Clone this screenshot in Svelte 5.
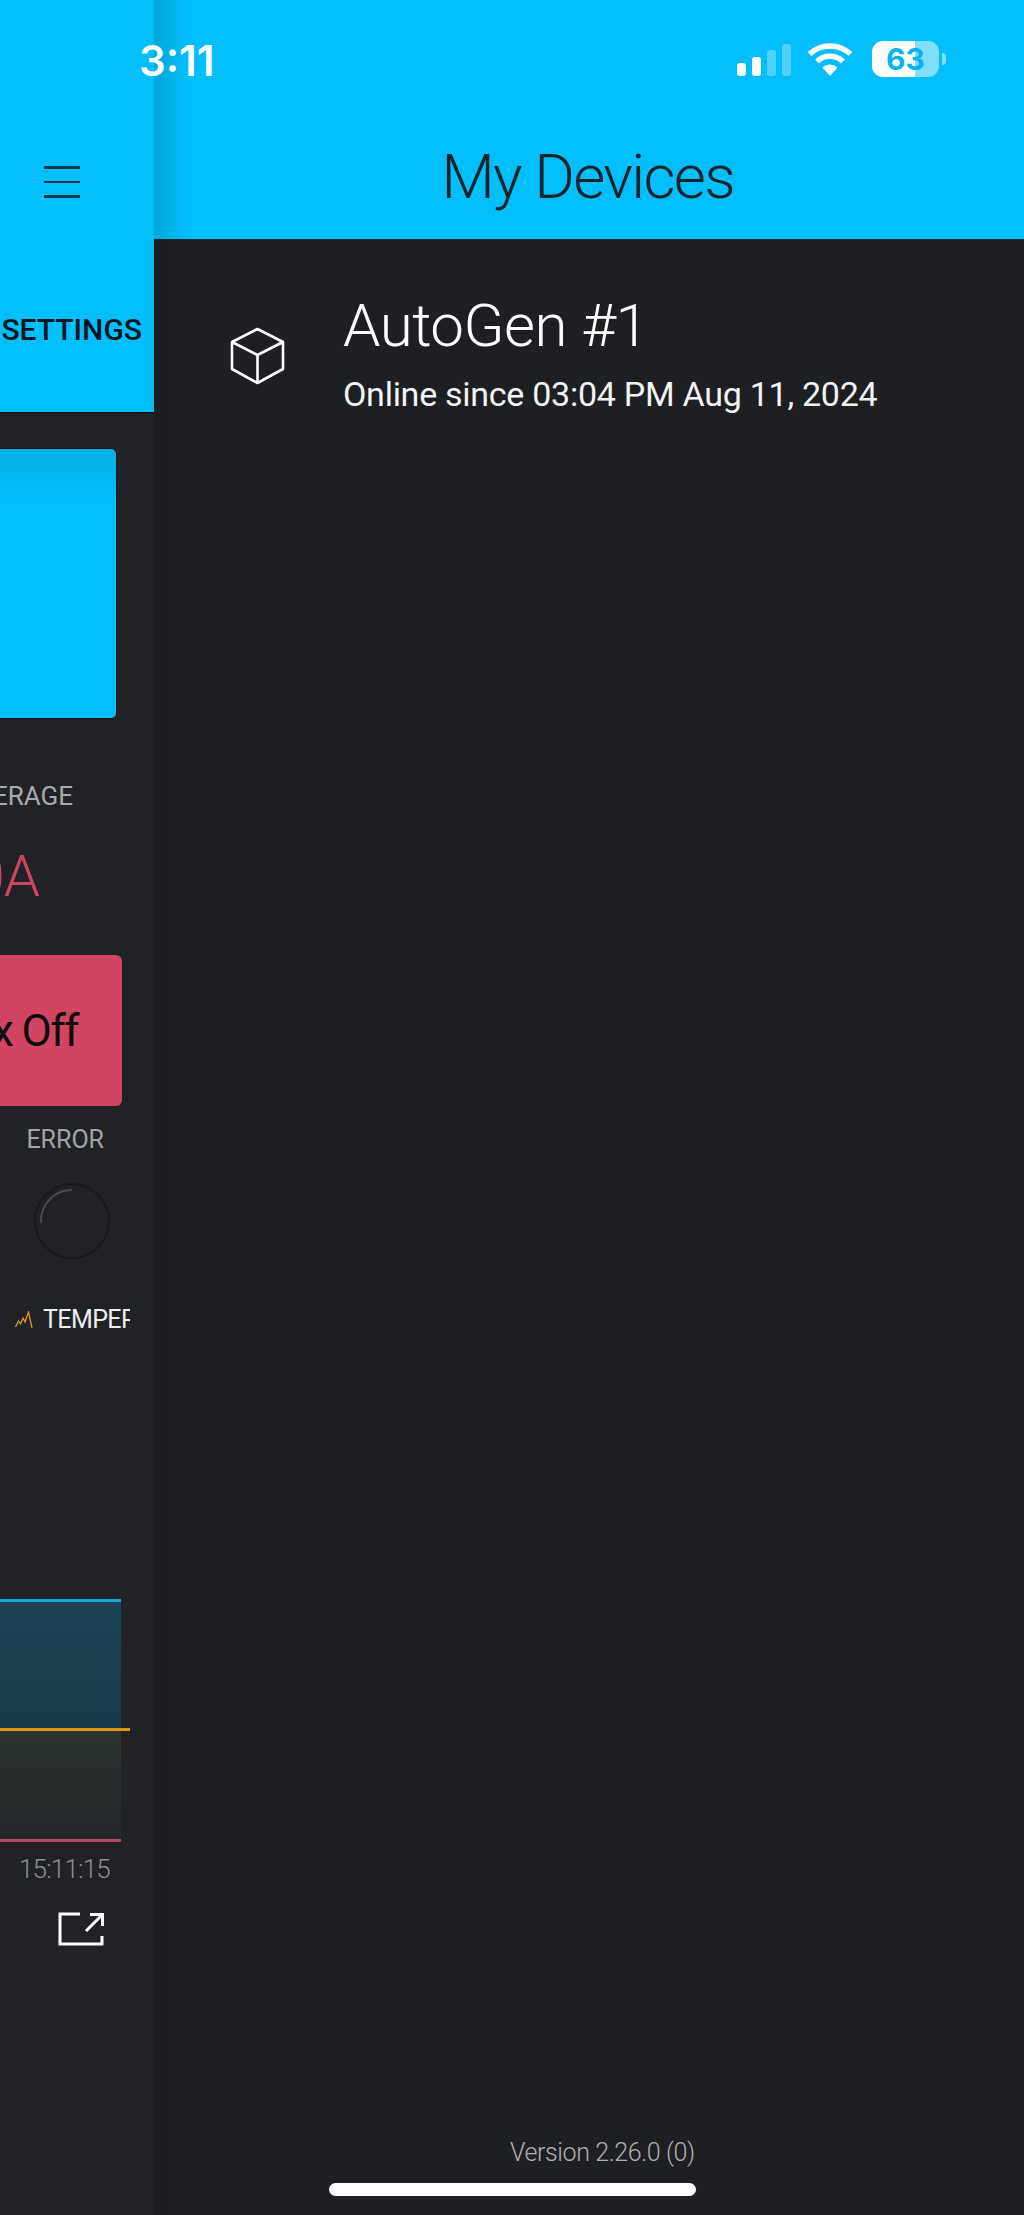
<script>
  const title = 'My Devices';
</script>

<div class="screen">
  <aside class="drawer">
    <header class="drawer-head">
      <div class="burger"><span></span><span></span><span></span></div>
      <div class="tab">SETTINGS</div>
    </header>
    <div class="card"></div>
    <div class="avg-label">AVERAGE</div>
    <div class="avg-value">0.0A</div>
    <button class="off">Aux Off</button>
    <div class="err-label">ERROR</div>
    <svg class="led" width="78" height="78" viewBox="0 0 78 78">
      <circle cx="39" cy="39" r="37" fill="#212226" stroke="#17181b" stroke-width="2" />
      <path d="M8 39 A31 31 0 0 1 39 8" fill="none" stroke="#4b4c4f" stroke-width="2" stroke-linecap="round" transform="rotate(-2 39 39)" />
    </svg>
    <div class="legend">
      <svg width="18" height="18" viewBox="0 0 18 18"><path d="M0.500 16 L3.500 10 L5.500 13 L8 7 L10 11 L13.500 1 L17 17" fill="none" stroke="#d79a1c" stroke-width="1.300" /></svg>
      <span class="legend-clip">TEMPERATURE</span>
    </div>
    <div class="chart">
      <div class="line blue"></div>
      <div class="fill top"></div>
      <div class="line orange"></div>
      <div class="fill bottom"></div>
      <div class="line red"></div>
    </div>
    <div class="clock">15:11:15</div>
    <svg class="export" width="46" height="34" viewBox="0 0 46 34">
      <path d="M22 2 H2 V32 H44 V24" fill="none" stroke="#fff" stroke-width="3" />
      <path d="M28 19 L43 4 M32 2.500 H44.500 V14" fill="none" stroke="#fff" stroke-width="3" />
    </svg>
  </aside>

  <main class="main">
    <header class="main-head"><h1>{title}</h1></header>
    <div class="device">
      <svg class="cube" width="57" height="58" viewBox="0 0 57 58">
        <path d="M28.500 2 L54 15 V42 L28.500 56 L3 42 V15 Z M3 15 L28.500 28 L54 15 M28.500 28 V56" fill="none" stroke="#fff" stroke-width="2.600" stroke-linejoin="round" />
      </svg>
      <div class="device-text">
        <div class="name">AutoGen #1</div>
        <div class="since">Online since 03:04 PM Aug 11, 2024</div>
      </div>
    </div>
    <div class="version">Version 2.26.0 (0)</div>
  </main>

  <div class="status">
    <span class="time">3:11</span>
    <div class="status-icons">
      <div class="signal">
        <i class="b1"></i><i class="b2"></i><i class="b3"></i><i class="b4"></i>
      </div>
      <svg class="wifi" width="46" height="33" viewBox="0 0 46 33">
        <path d="M2.500 11 A30 30 0 0 1 43.500 11" fill="none" stroke="#fff" stroke-width="5.500" />
        <path d="M10 18.500 A19 19 0 0 1 36 18.500" fill="none" stroke="#fff" stroke-width="5.500" />
        <path d="M15.500 24.500 A11 11 0 0 1 30.500 24.500 L23 33 Z" fill="#fff" />
      </svg>
      <div class="battery"><span>63</span></div>
      <div class="nub"></div>
    </div>
  </div>
  <div class="home"></div>
</div>

<style>
  :global(body) { margin: 0; background: #1e1f23; }
  .screen {
    position: relative;
    display: flex;
    width: 1024px;
    height: 2215px;
    overflow: hidden;
    font-family: Roboto, "Liberation Sans", sans-serif;
  }

  /* left drawer, pushed mostly off-screen */
  .drawer {
    width: 154px;
    flex: none;
    display: flex;
    flex-direction: column;
    align-items: flex-end;
    background: #212226;
    overflow: hidden;
  }
  .drawer-head {
    width: 100%;
    height: 412px;
    flex: none;
    background: #02bffb;
    border-bottom: 1px solid #0c0f12;
    position: relative;
    display: flex;
    flex-direction: column;
    align-items: flex-end;
  }
  .burger {
    align-self: flex-start;
    margin: 166px 0 0 44px;
    width: 36px;
    display: flex;
    flex-direction: column;
    gap: 12px;
  }
  .burger span { height: 2.500px; background: #12384a; }
  .tab {
    margin: 114px 12px 0 0;
    font-size: 30px;
    line-height: 36px;
    font-weight: 500;
    color: #03151f;
    white-space: nowrap;
  }
  .card {
    width: 200px;
    height: 271px;
    flex: none;
    margin: 35px 37px 0 0;
    box-sizing: border-box;
    border: 1px solid #14181c;
    border-radius: 6px;
    background: linear-gradient(#04b1e6, #02bffb 20%);
  }
  .avg-label {
    margin: 64px 81px 0 0;
    font-size: 26px;
    line-height: 26px;
    color: #a9aaac;
    white-space: nowrap;
  }
  .avg-value {
    margin: 37px 115px 0 0;
    font-size: 58px;
    line-height: 60px;
    font-weight: 300;
    letter-spacing: -1px;
    color: #d04563;
    white-space: nowrap;
  }
  .off {
    width: 260px;
    height: 151px;
    flex: none;
    margin: 49px 32px 0 0;
    padding: 0 44px 0 0;
    text-align: right;
    border: 0;
    border-radius: 6px;
    background: #d14562;
    color: #0d0b0d;
    font: 400 44px/1 Roboto, sans-serif;
    letter-spacing: -1.500px;
    white-space: nowrap;
  }
  .err-label {
    margin: 21px 50px 0 0;
    font-size: 25px;
    line-height: 26px;
    color: #a2a4a8;
  }
  .led { flex: none; margin: 29px 43px 0 0; }
  .legend {
    display: flex;
    align-items: center;
    gap: 11px;
    width: 115px;
    margin: 45px 24px 0 0;
  }
  .legend svg { flex: none; }
  .legend-clip {
    margin-left: -1px;
    font-size: 25px;
    line-height: 30px;
    letter-spacing: -0.600px;
    color: #eceeef;
    white-space: nowrap;
    overflow: hidden;
  }
  .chart {
    width: 240px;
    flex: none;
    margin: 264px 24px 0 0;
    display: flex;
    flex-direction: column;
  }
  .line { height: 3px; flex: none; }
  .blue { background: #18a7d8; margin-right: 9px; }
  .orange { background: #d89a12; }
  .red { background: #b34b63; margin-right: 9px; }
  .fill { margin-right: 9px; }
  .top { height: 126px; background: linear-gradient(#1b4252, #1c3a48); }
  .bottom { height: 108px; background: linear-gradient(#2b3431, #242628); }
  .clock {
    margin: 11px 44px 0 0;
    font-size: 26px;
    line-height: 32px;
    font-weight: 300;
    letter-spacing: -0.800px;
    color: #8e8f92;
  }
  .export { flex: none; margin: 27px 50px 0 0; }

  /* main panel */
  .main {
    flex: 1;
    display: flex;
    flex-direction: column;
    background: #1e1f23;
    position: relative;
  }
  .main::before {
    content: "";
    position: absolute;
    left: 0;
    top: 0;
    bottom: 0;
    width: 34px;
    background: linear-gradient(90deg, rgba(0, 0, 0, 0.13), rgba(0, 0, 0, 0));
  }
  .main-head {
    height: 239px;
    flex: none;
    display: flex;
    justify-content: center;
    background: #02bffb;
    border-bottom: 1px solid #0c2a38;
  }
  h1 {
    margin: 137px 3px 0 0;
    font-size: 62px;
    line-height: 80px;
    font-weight: 300;
    letter-spacing: -1.700px;
    color: #16232b;
  }
  .device {
    display: flex;
    align-items: flex-start;
    gap: 57px;
    padding: 51px 0 0 75px;
  }
  .cube { flex: none; margin-top: 36px; }
  .name {
    font-size: 60px;
    line-height: 70px;
    font-weight: 300;
    letter-spacing: -0.500px;
    color: #fff;
    white-space: nowrap;
  }
  .since {
    margin-top: 12px;
    font-size: 34px;
    line-height: 42px;
    font-weight: 400;
    letter-spacing: -0.270px;
    color: #f2f3f4;
    white-space: nowrap;
  }
  .version {
    margin: auto 0 47px 356px;
    font-size: 25px;
    line-height: 30px;
    font-weight: 300;
    letter-spacing: -0.400px;
    color: #b0b0b2;
    white-space: nowrap;
  }

  /* system overlays */
  .status {
    position: absolute;
    left: 0;
    top: 0;
    width: 100%;
    height: 100px;
    pointer-events: none;
  }
  .time {
    position: absolute;
    left: 139px;
    top: 37px;
    font: 600 42px/48px Inter, sans-serif;
    color: #fff;
  }
  .status-icons {
    position: absolute;
    left: 737px;
    top: 41px;
    display: flex;
    align-items: flex-end;
  }
  .signal { display: flex; align-items: flex-end; gap: 6px; margin-bottom: 1px; }
  .signal i { display: block; width: 9px; border-radius: 3px; background: #fff; }
  .b1 { height: 13px; }
  .b2 { height: 19px; }
  .signal .b3 { height: 26px; background: rgba(255, 255, 255, 0.3); }
  .signal .b4 { height: 32px; background: rgba(255, 255, 255, 0.3); }
  .wifi { margin: 0 0 1px 16px; flex: none; }
  .battery {
    margin-left: 19px;
    width: 67px;
    height: 36px;
    border-radius: 11px;
    background: linear-gradient(90deg, #fff 64%, rgba(255, 255, 255, 0.5) 64%);
    display: flex;
    align-items: center;
    justify-content: center;
    font: 700 30px/36px Inter, sans-serif;
    color: #06b4ef;
  }
  .nub {
    width: 4px;
    height: 12px;
    margin: 0 0 12px 3px;
    border-radius: 0 4px 4px 0;
    background: rgba(255, 255, 255, 0.5);
  }
  .home {
    position: absolute;
    left: 329px;
    top: 2183px;
    width: 367px;
    height: 13px;
    border-radius: 7px;
    background: #fff;
  }
</style>
